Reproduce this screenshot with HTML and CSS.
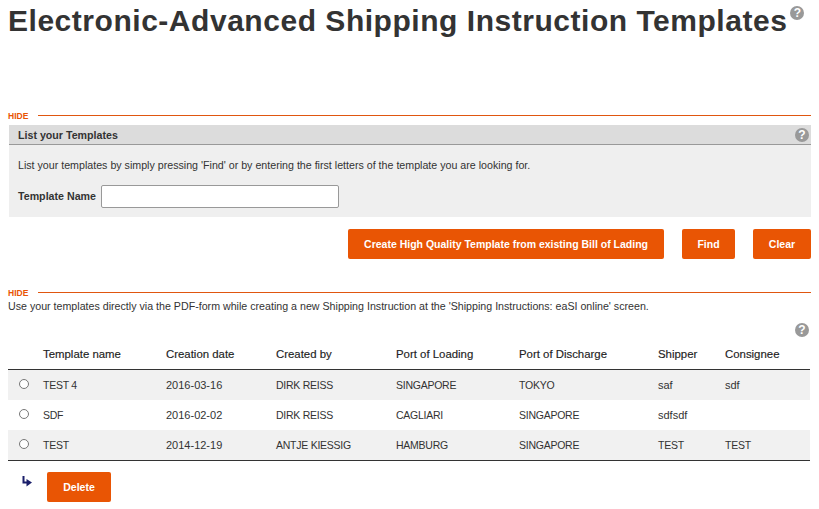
FILE: index.html
```html
<!DOCTYPE html>
<html lang="en">
<head>
    <meta charset="UTF-8" />
    <meta name="viewport" content="width=device-width, initial-scale=1" />
    <title>Electronic-Advanced Shipping Instruction Templates</title>
    <link rel="stylesheet" href="styles.css">
</head>
<body>
    <header class="page-title">
        <h1>Electronic-Advanced Shipping Instruction Templates</h1>
        <span class="help help-title">?</span>
    </header>

    <section class="search-section">
        <div class="section-toggle">
            <a class="hide-link">HIDE</a>
            <span class="toggle-line"></span>
        </div>
        <div class="panel">
            <div class="panel-head">
                <h2>List your Templates</h2>
                <span class="help">?</span>
            </div>
            <div class="panel-body">
                <p>List your templates by simply pressing 'Find' or by entering the first letters of the template you are looking for.</p>
                <div class="field">
                    <label for="template-name">Template Name</label>
                    <input type="text" id="template-name" />
                </div>
            </div>
        </div>
        <div class="actions">
            <button type="button" class="btn">Create High Quality Template from existing Bill of Lading</button>
            <button type="button" class="btn btn-find">Find</button>
            <button type="button" class="btn btn-clear">Clear</button>
        </div>
    </section>

    <section class="results-section">
        <div class="section-toggle">
            <a class="hide-link">HIDE</a>
            <span class="toggle-line"></span>
        </div>
        <p class="intro">Use your templates directly via the PDF-form while creating a new Shipping Instruction at the 'Shipping Instructions: eaSI online' screen.</p>
        <div class="table-help"><span class="help">?</span></div>
        <table class="templates">
            <colgroup>
                <col class="col-radio">
                <col class="col-name">
                <col class="col-date">
                <col class="col-by">
                <col class="col-pol">
                <col class="col-pod">
                <col class="col-shipper">
                <col>
            </colgroup>
            <thead>
                <tr>
                    <th></th>
                    <th>Template name</th>
                    <th>Creation date</th>
                    <th>Created by</th>
                    <th>Port of Loading</th>
                    <th>Port of Discharge</th>
                    <th>Shipper</th>
                    <th>Consignee</th>
                </tr>
            </thead>
            <tbody>
                <tr>
                    <td><span class="radio"></span></td>
                    <td class="caps">TEST 4</td>
                    <td>2016-03-16</td>
                    <td class="caps">DIRK REISS</td>
                    <td class="caps">SINGAPORE</td>
                    <td class="caps">TOKYO</td>
                    <td>saf</td>
                    <td>sdf</td>
                </tr>
                <tr>
                    <td><span class="radio"></span></td>
                    <td class="caps">SDF</td>
                    <td>2016-02-02</td>
                    <td class="caps">DIRK REISS</td>
                    <td class="caps">CAGLIARI</td>
                    <td class="caps">SINGAPORE</td>
                    <td>sdfsdf</td>
                    <td></td>
                </tr>
                <tr>
                    <td><span class="radio"></span></td>
                    <td class="caps">TEST</td>
                    <td>2014-12-19</td>
                    <td class="caps">ANTJE KIESSIG</td>
                    <td class="caps">HAMBURG</td>
                    <td class="caps">SINGAPORE</td>
                    <td class="caps">TEST</td>
                    <td class="caps">TEST</td>
                </tr>
            </tbody>
        </table>
        <div class="table-actions">
            <svg class="arrow" width="10" height="11" viewBox="0 0 10 11">
                <path d="M1.5 0V6.5H5" fill="none" stroke="#1b1f6b" stroke-width="2" />
                <path d="M4.5 3L10 6.5L4.5 10.5Z" fill="#1b1f6b" />
            </svg>
            <button type="button" class="btn btn-delete">Delete</button>
        </div>
    </section>
</body>
</html>
```

FILE: styles.css
```css
/* Grundlayout */
* {
    box-sizing: border-box;
}
html, body {
    margin: 0;
    height: 100%;
    overflow: hidden;
}
body {
    padding: 0 8px;
    background: #fff;
    color: #333;
    font-family: "Liberation Sans", Arial, sans-serif;
    font-size: 8pt;
}

/* Title */
.page-title {
    display: flex;
    align-items: flex-start;
    height: 115px;
}
h1 {
    margin: 2px 0 0;
    font-size: 30px;
    line-height: 38px;
    font-weight: 700;
    letter-spacing: 0.53px;
    white-space: nowrap;
}
.help {
    display: flex;
    justify-content: center;
    align-items: center;
    flex: none;
    width: 14px;
    height: 14px;
    border-radius: 50%;
    background: #999;
    color: #fff;
    font-size: 12px;
    font-weight: 700;
    line-height: 14px;
}
.help-title {
    margin: 6px 0 0 3px;
}

/* HIDE line */
.section-toggle {
    display: flex;
    align-items: flex-start;
    height: 7px;
}
.hide-link {
    width: 30px;
    margin-top: -4px;
    color: #e95504;
    font-size: 8.5px;
    font-weight: 700;
    line-height: 10px;
}
.toggle-line {
    flex: 1;
    height: 1px;
    background: #e0560f;
}

/* Panel */
.panel {
    margin: 3px 0 0 1px;
    background: #efefef;
}
.panel-head {
    display: flex;
    justify-content: space-between;
    align-items: center;
    height: 20px;
    padding: 0 2px 0 9px;
    background: #dcdcdc;
    border-bottom: 1px solid #999;
}
.panel-head h2 {
    margin: 0;
    font-size: 8pt;
    font-weight: 700;
}
.panel-body {
    height: 72px;
    padding: 14px 9px 0;
}
.panel-body p {
    margin: 0;
    line-height: 13px;
}
.field {
    display: flex;
    align-items: center;
    margin-top: 13px;
}
.field label {
    width: 83px;
    padding-bottom: 2px;
    font-weight: 700;
}
.field input {
    width: 238px;
    height: 23px;
    border: 1px solid #999;
    border-radius: 2px;
    background: #fff;
}

/* Buttons */
.actions {
    display: flex;
    justify-content: flex-end;
    gap: 18px;
    margin-top: 12px;
}
.btn {
    height: 30px;
    padding: 0 16px;
    border: none;
    border-radius: 2px;
    background: #e95504;
    color: #fff;
    font-family: inherit;
    font-size: 10.5px;
    font-weight: 700;
}
.btn-find {
    width: 53px;
    padding: 0;
}
.btn-clear {
    width: 58px;
    padding: 0;
}
.btn-delete {
    width: 64px;
    padding: 0;
}

/* Results */
.results-section {
    margin-top: 33px;
}
.intro {
    margin: 1px 0 0;
    line-height: 13px;
}
.table-help {
    display: flex;
    justify-content: flex-end;
    margin-top: 10px;
    padding-right: 2px;
    height: 14px;
}
.templates {
    width: 802px;
    margin-top: 2px;
    table-layout: fixed;
    border-collapse: separate;
    border-spacing: 0;
    border-bottom: 1px solid #333;
}
.col-radio { width: 35px; }
.col-name { width: 123px; }
.col-date { width: 110px; }
.col-by { width: 120px; }
.col-pol { width: 123px; }
.col-pod { width: 139px; }
.col-shipper { width: 67px; }
.templates th {
    height: 31px;
    padding: 0;
    text-align: left;
    font-size: 11.4px;
    font-weight: 400;
    color: #222;
    -webkit-text-stroke: 0.15px #222;
    border-bottom: 1px solid #333;
}
.templates td {
    height: 30px;
    padding: 0;
    font-size: 11px;
}
.templates td.caps {
    font-size: 10.5px;
    letter-spacing: -0.25px;
}
.templates tbody tr:nth-child(odd) {
    background: #f1f1f1;
}
.radio {
    display: block;
    width: 10px;
    height: 10px;
    margin: -2px 0 0 11px;
    border: 1px solid #777;
    border-radius: 50%;
    background: #fff;
}
.table-actions {
    display: flex;
    align-items: flex-start;
    margin-top: 11px;
}
.arrow {
    margin: 4px 0 0 14px;
}
.btn-delete {
    margin-left: 15px;
}
```
